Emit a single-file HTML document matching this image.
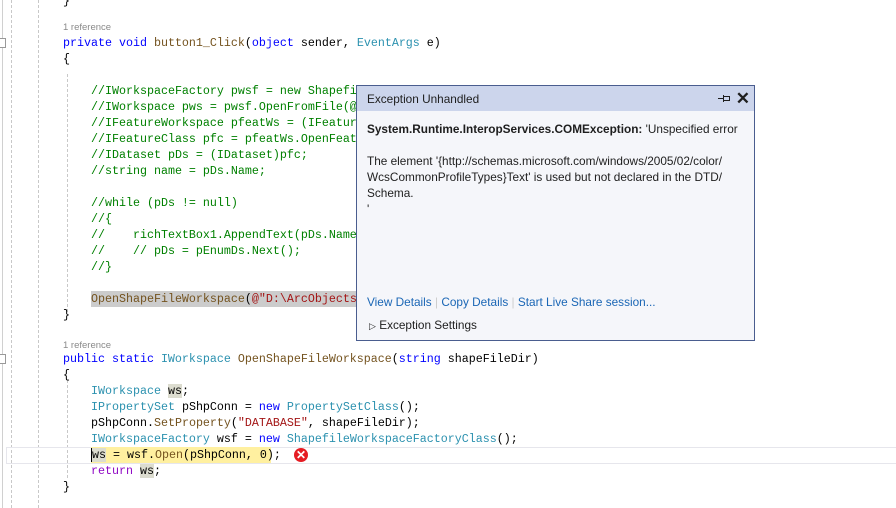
<!DOCTYPE html>
<html><head><meta charset="utf-8"><style>
body{margin:0;width:896px;height:508px;background:#fff;position:relative;overflow:hidden;font-family:"Liberation Mono",monospace;}
.l{position:absolute;left:0;height:16px;line-height:16px;font-size:11.67px;white-space:pre;color:#000;}
.ref{position:absolute;font-family:"Liberation Sans",sans-serif;font-size:9.5px;color:#8a8a8a;}
.k{color:#0000ff}.t{color:#2b91af}.c{color:#008000}.s{color:#a31515}.m{color:#74531f}.r{color:#8f08c4}
.g{position:absolute;top:0;bottom:0;width:0;border-left:1px dashed #c8c8c8}
.pop{position:absolute;left:356px;top:85px;width:397px;height:254px;border:1px solid #4a5d8f;background:#f5f6fa;font-family:"Liberation Sans",sans-serif;font-size:11.8px;color:#1e1e1e}
.hd{height:25px;background:#ccd5ec;line-height:26px;padding-left:10px;position:relative}
.lk{color:#1a66b5}
</style></head><body>
<div style="position:absolute;left:2px;top:0;bottom:0;border-left:1px solid #d0d0d0"></div>
<div class="g" style="left:11px"></div>
<div class="g" style="left:38px"></div>
<div class="g" style="left:67px;top:74px;bottom:196px"></div>
<div class="g" style="left:67px;top:380px;bottom:30px"></div>
<div style="position:absolute;left:-4px;top:38px;width:8px;height:8px;border:1px solid #999;background:#fff"></div>
<div style="position:absolute;left:-4px;top:354px;width:8px;height:8px;border:1px solid #999;background:#fff"></div>
<div class="l" style="top:-7px;left:63px">}</div>
<div class="ref" style="left:63px;top:22px">1 reference</div>
<div class="l" style="top:35px;left:63px"><span class="k">private void</span> <span class="m">button1_Click</span>(<span class="k">object</span> sender, <span class="t">EventArgs</span> e)</div>
<div class="l" style="top:51px;left:63px">{</div>
<div class="l c" style="top:83px;left:91px">//IWorkspaceFactory pwsf = new ShapefileWorkspaceFactory</div>
<div class="l c" style="top:99px;left:91px">//IWorkspace pws = pwsf.OpenFromFile(@</div>
<div class="l c" style="top:115px;left:91px">//IFeatureWorkspace pfeatWs = (IFeatureWorkspace)</div>
<div class="l c" style="top:131px;left:91px">//IFeatureClass pfc = pfeatWs.OpenFeatureClass</div>
<div class="l c" style="top:147px;left:91px">//IDataset pDs = (IDataset)pfc;</div>
<div class="l c" style="top:163px;left:91px">//string name = pDs.Name;</div>
<div class="l c" style="top:195px;left:91px">//while (pDs != null)</div>
<div class="l c" style="top:211px;left:91px">//{</div>
<div class="l c" style="top:227px;left:91px">//    richTextBox1.AppendText(pDs.Name</div>
<div class="l c" style="top:243px;left:91px">//    // pDs = pEnumDs.Next();</div>
<div class="l c" style="top:259px;left:91px">//}</div>
<div class="l" style="top:291px;left:91px;background:#cccccc;width:270px"><span class="m">OpenShapeFileWorkspace</span>(<span class="s">@"D:\ArcObjects</span></div>
<div class="l" style="top:307px;left:63px">}</div>
<div class="ref" style="left:63px;top:340px">1 reference</div>
<div class="l" style="top:351px;left:63px"><span class="k">public static</span> <span class="t">IWorkspace</span> <span class="m">OpenShapeFileWorkspace</span>(<span class="k">string</span> shapeFileDir)</div>
<div class="l" style="top:367px;left:63px">{</div>
<div class="l" style="top:383px;left:91px"><span class="t">IWorkspace</span> <span style="background:#dcdccf">ws</span>;</div>
<div class="l" style="top:399px;left:91px"><span class="t">IPropertySet</span> pShpConn = <span class="k">new</span> <span class="t">PropertySetClass</span>();</div>
<div class="l" style="top:415px;left:91px">pShpConn.<span class="m">SetProperty</span>(<span class="s">"DATABASE"</span>, shapeFileDir);</div>
<div class="l" style="top:431px;left:91px"><span class="t">IWorkspaceFactory</span> wsf = <span class="k">new</span> <span class="t">ShapefileWorkspaceFactoryClass</span>();</div>
<div style="position:absolute;left:6px;top:447px;width:896px;height:15px;border:1px solid #e6e6ec;border-right:none"></div>
<div class="l" style="top:447px;left:91px;background:#fff0a0;width:180px"><span style="background:#dcdccf;border-left:1px solid #000">ws</span> = wsf.<span class="m">Open</span>(pShpConn, 0);</div>
<div style="position:absolute;left:294px;top:448px;width:14px;height:14px;border-radius:50%;background:#e51c23;color:#fff;font-family:'Liberation Sans',sans-serif;font-weight:bold;font-size:12px;line-height:14px;text-align:center">✕</div>
<div class="l" style="top:463px;left:91px"><span class="r">return</span> <span style="background:#dcdccf">ws</span>;</div>
<div class="l" style="top:479px;left:63px">}</div>
<div class="pop">
<div class="hd">Exception Unhandled
<div style="position:absolute;left:361px;top:12px;width:6px;height:1px;background:#1e1e1e"></div>
<div style="position:absolute;left:366px;top:9px;width:1px;height:7px;background:#1e1e1e"></div>
<div style="position:absolute;left:367px;top:10px;height:5px;border:1px solid #1e1e1e;border-left:none;box-sizing:border-box;width:6px"></div>
<span style="position:absolute;right:4px;top:0;font-size:17px;font-weight:bold">✕</span></div>
<div style="position:absolute;left:10px;top:36px"><b>System.Runtime.InteropServices.COMException:</b> 'Unspecified error</div>
<div style="position:absolute;left:10px;top:67px;line-height:16px;width:385px">The element '{http://schemas.microsoft.com/windows/2005/02/color/<br>WcsCommonProfileTypes}Text' is used but not declared in the DTD/<br>Schema.<br>'</div>
<div style="position:absolute;left:10px;top:209px" class="lk">View Details <span style="color:#ccc">|</span> Copy Details <span style="color:#ccc">|</span> Start Live Share session...</div>
<div style="position:absolute;left:12px;top:232px"><span style="font-size:9px">▷</span> Exception Settings</div>
</div>
</body></html>
